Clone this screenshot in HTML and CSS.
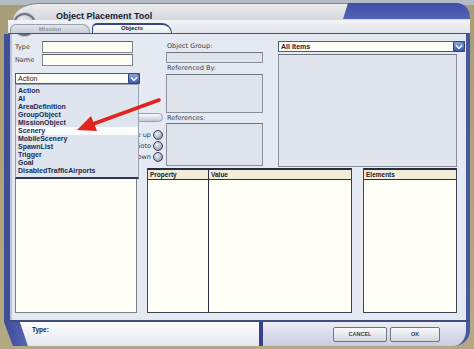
FILE: index.html
```html
<!DOCTYPE html>
<html lang="en">
<head>
	<meta charset="UTF-8">
	<title>Object Placement Tool</title>
	<link rel="stylesheet" href="styles.css">
</head>
<body>
	<div class="screen">
		<div class="window">
			<div class="titlebar">
				<span class="title">Object Placement Tool</span>
				<span class="title-accent"></span>
			</div>
			<div class="bezel"></div>
			<div class="tabstrip">
				<div class="tab">Mission</div>
				<div class="tab active">Objects</div>
			</div>
			<div class="panel">
				<div class="top-row">
					<div class="col-left">
						<div class="field first"><label>Type</label><span class="input"></span></div>
						<div class="field"><label>Name</label><span class="input"></span></div>
						<div class="select action">
							<span class="select-text">Action</span>
							<span class="chev"><svg width="8" height="6" viewBox="0 0 8 6"><path d="M1 1.2 L4 4.4 L7 1.2" fill="none" stroke="#fff" stroke-width="1.4"/></svg></span>
							<ul class="options">
								<li>Action</li>
								<li>AI</li>
								<li>AreaDefinition</li>
								<li>GroupObject</li>
								<li>MissionObject</li>
								<li class="hover">Scenery</li>
								<li>MobileScenery</li>
								<li>SpawnList</li>
								<li>Trigger</li>
								<li>Goal</li>
								<li>DisabledTrafficAirports</li>
							</ul>
						</div>
						<div class="bar-button"></div>
						<div class="radios">
							<div class="radio-row"><span>Move up</span><i class="radio"></i></div>
							<div class="radio-row"><span>Goto</span><i class="radio"></i></div>
							<div class="radio-row"><span>Move down</span><i class="radio"></i></div>
						</div>
					</div>
					<div class="col-mid">
						<div class="cap cap1">Object Group:</div>
						<div class="box box1"></div>
						<div class="cap cap2">Referenced By:</div>
						<div class="box box2"></div>
						<div class="cap cap3">References:</div>
						<div class="box box3"></div>
					</div>
					<div class="col-right">
						<div class="select all">
							<span class="select-text">All Items</span>
							<span class="chev"><svg width="8" height="6" viewBox="0 0 8 6"><path d="M1 1.2 L4 4.4 L7 1.2" fill="none" stroke="#fff" stroke-width="1.4"/></svg></span>
						</div>
						<div class="box items"></div>
					</div>
				</div>
				<div class="bottom-row">
					<div class="left-list"></div>
					<div class="grid props">
						<div class="head prop">Property</div>
						<div class="head">Value</div>
						<div class="cell prop"></div>
						<div class="cell"></div>
					</div>
					<div class="grid elements">
						<div class="head">Elements</div>
						<div class="cell"></div>
					</div>
				</div>
			</div>
			<div class="footer">
				<div class="notch"></div>
				<div class="typebox"><b>Type:</b></div>
				<div class="actions">
					<button class="btn cancel">CANCEL</button>
					<button class="btn ok">OK</button>
				</div>
			</div>
		</div>
		<svg class="arrow" width="474" height="349" viewBox="0 0 474 349">
			<line x1="159" y1="100" x2="93" y2="124" stroke="#e2231e" stroke-width="3.6" stroke-linecap="round"/>
			<polygon points="77,130 97,131 91,116" fill="#e2231e"/>
		</svg>
	</div>
</body>
</html>
```

FILE: styles.css
```css
*{ margin: 0; padding: 0; box-sizing: border-box; }
li{ list-style: none; }
body{ width: 474px; height: 349px; overflow: hidden; font-family: "Liberation Sans", Arial, sans-serif; color: #1c2a50; }

.screen{ position: relative; width: 474px; height: 349px; padding: 3px 4px 0 4px; background: linear-gradient(to bottom, #b3bbc4 0, #b3bbc4 5px, #a89d76 5px, #b4a984 100%); }
.window{ position: relative; width: 466px; height: 346px; display: flex; flex-direction: column; }

/* title */
.titlebar{ position: relative; height: 17px; margin-left: 9px; padding: 8px 0 0 43px; font: bold 9px/9px "Liberation Sans", Arial, sans-serif; background: linear-gradient(#ececee, #d6d8dd); border-top: 1px solid #7d8494; border-radius: 26px 14px 0 0 / 17px 14px 0 0; }
.title{ position: relative; z-index: 2; display: block; color: #161c36; }
.title-accent{ position: absolute; top: -1px; right: 0; width: 127px; height: 16px; background: linear-gradient(#3f4fa6, #5262b6); border-radius: 0 14px 0 0; clip-path: polygon(5px 0, 100% 0, 100% 100%, 0 100%); }
.bezel{ position: absolute; left: 9px; top: 10px; width: 23px; height: 23px; border-radius: 50%; background: radial-gradient(circle at 40% 35%, #f4f4f6, #b9bdc6 75%); border: 2px solid #6b7180; box-shadow: 0 0 0 1px #c9cdd5; }

/* tabs */
.tabstrip{ position: relative; height: 14px; margin-left: 4px; padding-left: 2px; display: flex; align-items: flex-end; background: linear-gradient(#f2f3f6, #e2e5eb); border-bottom: 1px solid #4c5468; }
.tab{ width: 80px; height: 9px; font: bold 6px/8px "Liberation Sans", Arial, sans-serif; text-align: center; color: #8d95a6; background: linear-gradient(#e2e4ea, #c9cdd7); border: 1px solid #9aa0ae; border-bottom: none; border-radius: 6px 8px 0 0; }
.tab.active{ margin-left: 2px; height: 10px; color: #161c30; background: linear-gradient(#fdfdfe, #e6eaf2); border: 1px solid #34468a; border-top-width: 2px; border-bottom: none; border-radius: 5px 10px 0 0; line-height: 7px; }

/* panel */
.panel{ height: 286px; display: flex; flex-direction: column; padding: 6px 0 0 5px; background: #e5e9f1; border-left: 6px solid #3f4f95; border-right: 4px solid #4858a0; box-shadow: inset 2px 0 0 #bcc5dc; }
.top-row{ display: flex; height: 127px; }
.bottom-row{ display: flex; height: 146px; }

.col-left{ position: relative; width: 148px; }
.field{ display: flex; height: 13px; }
.field.first{ margin-top: 1px; }
.field label{ width: 27px; font: 6.5px/12px "DejaVu Sans", sans-serif; color: #3a3e48; }
.input{ width: 91px; height: 12px; background: #fefef4; border: 1px solid #80858f; border-top-color: #5d626c; }

.select{ position: relative; display: flex; height: 11px; background: #fdfdf8; border: 1px solid #515868; }
.select-text{ flex: 1; padding-left: 2px; font-size: 7px; line-height: 9px; color: #1e2434; }
.select.all .select-text{ font-weight: bold; }
.chev{ width: 12px; margin: -1px -1px -1px 0; display: flex; align-items: center; justify-content: center; background: linear-gradient(#8aa4dc, #3d58aa); border: 1px solid #2c3e80; border-radius: 2px 4px 4px 2px; }
.select.action{ margin-top: 6px; width: 125px; }
.options{ position: absolute; z-index: 5; top: 10px; left: -1px; width: 124px; height: 95px; padding-top: 1.5px; background: #dfe5ee; border: 1px solid #9aa2b2; border-bottom: 2px solid #2e3850; }
.options li{ height: 8.1px; padding-left: 2px; font: bold 7px/8.1px "Liberation Sans", Arial, sans-serif; color: #1c2a50; }
.options li.hover{ background: #fbfcfe; }

.bar-button{ margin-top: 29px; height: 9px; background: linear-gradient(#fafbfd, #c3c9d4); border: 1px solid #98a0ae; border-radius: 2px 5px 5px 2px; }
.radios{ margin-top: 7px; }
.radio-row{ display: flex; height: 11px; align-items: center; justify-content: flex-end; font: 6.5px "DejaVu Sans", sans-serif; color: #333a48; }
.radio-row span{ margin-right: 2px; }
.radio{ width: 10px; height: 10px; border-radius: 50%; background: radial-gradient(circle at 40% 35%, #eef2f8, #8e9ab0 80%); border: 1px solid #39435e; }

.col-mid{ margin-left: 3px; width: 97px; }
.cap{ font: 6.5px "DejaVu Sans", sans-serif; color: #3a3e48; padding-left: 1px; }
.cap1{ height: 12px; line-height: 12px; }
.cap2{ height: 11px; line-height: 11px; }
.cap3{ height: 10px; line-height: 10px; }
.box{ background: #dfe4ec; border: 1px solid #8a909b; border-top-color: #6e7480; }
.box1{ height: 11px; }
.box2{ height: 39px; }
.box3{ height: 43px; }

.col-right{ margin-left: 15px; width: 187px; }
.select.all{ margin-top: 1px; }
.box.items{ margin-top: 2px; width: 179px; height: 113px; background: #e1e6ee; }

/* lists and tables */
.left-list{ margin-top: 3px; width: 122px; height: 143px; background: #fffff7; border: 1px solid #7b808a; border-top: 2px solid #2e3850; }
.grid{ display: grid; grid-template-rows: 10px 1fr; margin-top: 1px; height: 145px; background: #fffff7; border: 1px solid #3c4256; border-top-width: 2px; border-top-color: #262c44; }
.props{ margin-left: 10px; width: 205px; grid-template-columns: 61px 1fr; }
.elements{ margin-left: 11px; width: 94px; }
.head{ padding-left: 2px; font: bold 6.5px/9px "Liberation Sans", Arial, sans-serif; color: #1a2030; background: #f3ecd8; border-bottom: 1px solid #2a2e40; }
.prop{ border-right: 1px solid #2a2e40; }

/* footer */
.footer{ display: flex; height: 26px; border-top: 2px solid #414d80; }
.notch{ width: 24px; background: linear-gradient(90deg, #3c4c9a, #5566b4); clip-path: polygon(0 0, 66% 0, 100% 100%, 37% 100%); }
.typebox{ margin-left: -8px; width: 243px; padding: 4px 0 0 12px; font-size: 6.5px; color: #1a2030; background: linear-gradient(#fdfdfe, #e4e7ef); border-right: 4px solid #34438a; clip-path: polygon(0 0, 100% 0, 100% 100%, 8px 100%); }
.actions{ flex: 1; display: flex; justify-content: flex-end; align-items: flex-start; gap: 3px; padding: 5px 26px 0 0; background: linear-gradient(#eceef5, #c9cde0); border-right: 4px solid #4858a0; border-bottom-right-radius: 16px; }
.btn{ height: 15px; font: bold 5.5px/13px "Liberation Sans", Arial, sans-serif; color: #3a3e48; background: linear-gradient(#fbfbfd, #d4d7de); border: 1px solid #6e7482; border-radius: 2px; }
.cancel{ width: 54px; }
.ok{ width: 50px; }

.arrow{ position: absolute; z-index: 10; left: 0; top: 0; pointer-events: none; }
```
